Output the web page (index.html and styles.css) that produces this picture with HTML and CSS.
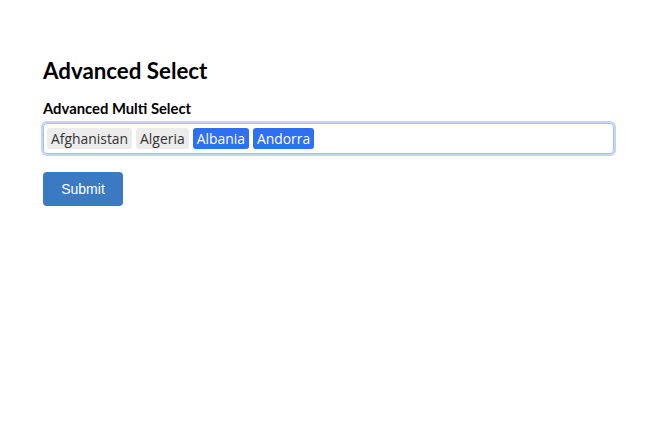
FILE: index.html
```html
<!DOCTYPE html>
<html lang="en">
<head>
<meta charset="utf-8">
<title>Advanced Select</title>
<link rel="stylesheet" href="styles.css">
</head>
<body>
<main class="page">
  <h1 class="title">Advanced Select</h1>
  <form class="form">
    <label class="label">Advanced Multi Select</label>
    <div class="select">
      <span class="chip">Afghanistan</span>
      <span class="chip">Algeria</span>
      <span class="chip chip-selected">Albania</span>
      <span class="chip chip-selected">Andorra</span>
    </div>
    <button type="button" class="submit">Submit</button>
  </form>
</main>
</body>
</html>
```
FILE: styles.css
```css
html, body {
  margin: 0;
  background: #ffffff;
}
.page {
  padding: 57px 43px 0 43px;
  font-family: "Open Sans", "DejaVu Sans", sans-serif;
  color: #000;
}
.title {
  margin: 0 0 14px 0;
  font-family: "Lato", "Open Sans", sans-serif;
  font-size: 22.3px;
  font-weight: 700;
  line-height: 28px;
}
.form {
  display: flex;
  flex-direction: column;
  align-items: flex-start;
}
.label {
  font-family: "Lato", "Open Sans", sans-serif;
  font-size: 14.8px;
  font-weight: 700;
  line-height: 18px;
  margin-bottom: 6px;
}
.select {
  box-sizing: border-box;
  width: 571px;
  height: 31px;
  display: flex;
  align-items: center;
  gap: 4px;
  padding: 0 3px;
  border: 1px solid #a6c1f6;
  border-radius: 4px;
  box-shadow: 0 0 0 2px #c2d4f9;
}
.chip {
  display: inline-flex;
  align-items: center;
  height: 21px;
  padding: 0 4px;
  border-radius: 3px;
  background: #ececec;
  color: #333;
  font-size: 13.9px;
}
.chip-selected {
  background: #2f6ff2;
  color: #fff;
}
.submit {
  margin-top: 18px;
  width: 80px;
  height: 34px;
  border: none;
  border-radius: 4px;
  background: #3b79c3;
  color: #fff;
  font-family: "Liberation Sans", Arial, sans-serif;
  font-size: 14px;
}
```
